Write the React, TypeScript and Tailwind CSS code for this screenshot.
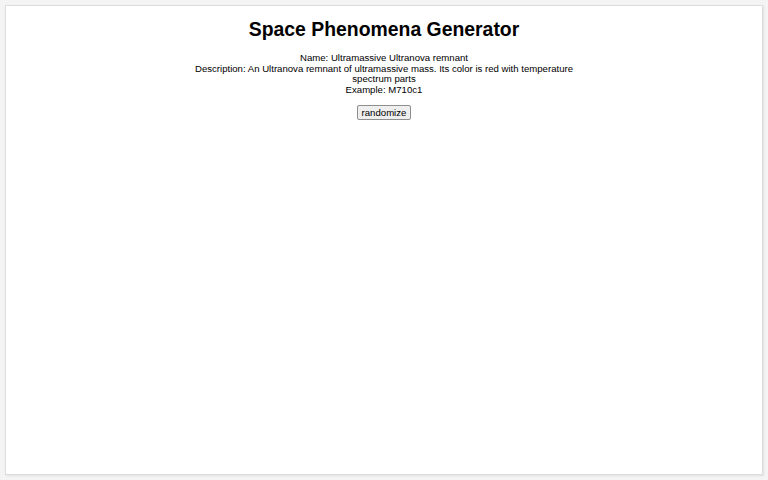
export default function App() {
  return (
    <div className="min-h-[480px] bg-[#f4f4f4] p-[5px] font-['Liberation_Sans',Arial,sans-serif]">
      <div className="flex h-[470px] flex-col items-center border border-[#dddddd] bg-white shadow-[1px_1px_2px_rgba(0,0,0,0.08)]">
        <h1 className="mt-[12px] text-[19.4px] font-bold leading-[22px] text-black">Space Phenomena Generator</h1>
        <div className="mt-[13px] w-[380px] text-center text-[9.6px] leading-[10.7px] text-black">
          <div>Name: Ultramassive Ultranova remnant</div>
          <div>Description: An Ultranova remnant of ultramassive mass. Its color is red with temperature spectrum parts</div>
          <div>Example: M710c1</div>
        </div>
        <button className="mt-[9px] rounded-[2px] border border-[#8f8f8f] bg-[#efefef] px-[4px] py-[1px] text-[9.6px] leading-[11px] text-black">
          randomize
        </button>
      </div>
    </div>
  );
}
